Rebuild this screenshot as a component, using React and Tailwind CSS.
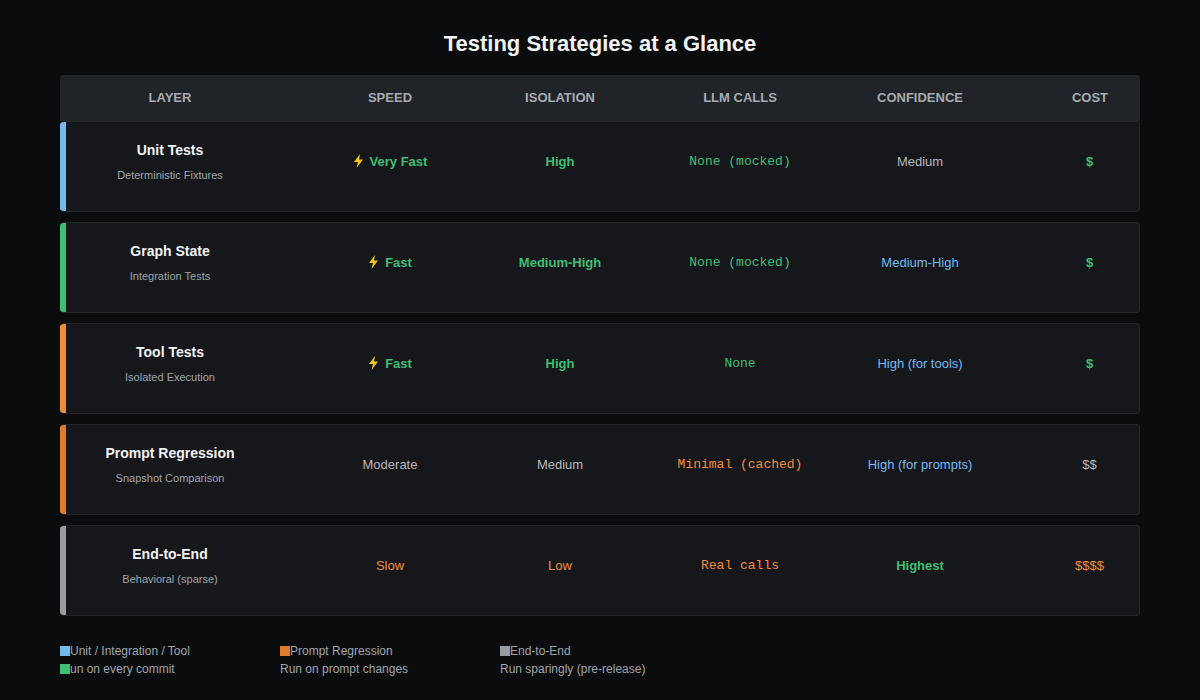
const rows = [
  { name: 'Unit Tests', sub: 'Deterministic Fixtures', bar: 'bg-[#74b9f0]', speed: 'Very Fast', speedC: 'text-[#3fbf73] font-bold', bolt: true, iso: 'High', isoC: 'text-[#3fbf73] font-bold', llm: 'None (mocked)', llmC: 'text-[#3fbf73]', conf: 'Medium', confC: 'text-[#b5b8bd]', cost: '$', costC: 'text-[#3fbf73] font-bold' },
  { name: 'Graph State', sub: 'Integration Tests', bar: 'bg-[#3fbf73]', speed: 'Fast', speedC: 'text-[#3fbf73] font-bold', bolt: true, iso: 'Medium-High', isoC: 'text-[#3fbf73] font-bold', llm: 'None (mocked)', llmC: 'text-[#3fbf73]', conf: 'Medium-High', confC: 'text-[#74b9f0]', cost: '$', costC: 'text-[#3fbf73] font-bold' },
  { name: 'Tool Tests', sub: 'Isolated Execution', bar: 'bg-[#f28c38]', speed: 'Fast', speedC: 'text-[#3fbf73] font-bold', bolt: true, iso: 'High', isoC: 'text-[#3fbf73] font-bold', llm: 'None', llmC: 'text-[#3fbf73]', conf: 'High (for tools)', confC: 'text-[#74b9f0]', cost: '$', costC: 'text-[#3fbf73] font-bold' },
  { name: 'Prompt Regression', sub: 'Snapshot Comparison', bar: 'bg-[#e07b28]', speed: 'Moderate', speedC: 'text-[#b5b8bd]', iso: 'Medium', isoC: 'text-[#b5b8bd]', llm: 'Minimal (cached)', llmC: 'text-[#f28c38]', conf: 'High (for prompts)', confC: 'text-[#74b9f0]', cost: '$$', costC: 'text-[#b5b8bd]' },
  { name: 'End-to-End', sub: 'Behavioral (sparse)', bar: 'bg-[#9a9ca1]', speed: 'Slow', speedC: 'text-[#f28c38]', iso: 'Low', isoC: 'text-[#f28c38]', llm: 'Real calls', llmC: 'text-[#f28c38]', conf: 'Highest', confC: 'text-[#3fbf73] font-bold', cost: '$$$$', costC: 'text-[#f28c38]' },
];

const cols = 'grid grid-cols-[220px_220px_120px_240px_120px_1fr] items-center text-center';

function Bolt() {
  return (
    <svg width="11" height="14" viewBox="0 0 11 14" className="inline-block mr-1.5 -mt-0.5">
      <path d="M7 0 L1 8 H5 L3.5 14 L10 5.5 H6 Z" fill="#f5c518" />
    </svg>
  );
}

export default function App() {
  return (
    <div className="min-h-screen w-full bg-[#0b0c0e] text-white font-[Liberation_Sans] px-[60px] pt-[30px]">
      <h1 className="text-center text-[22px] leading-[28px] font-bold text-[#f2f3f5] mb-[17px]">Testing Strategies at a Glance</h1>

      {/* Header */}
      <div className={`${cols} h-[46px] bg-[#202328] rounded-t-sm text-[13px] font-semibold text-[#a7abb1]`}>
        <div>LAYER</div>
        <div>SPEED</div>
        <div>ISOLATION</div>
        <div>LLM CALLS</div>
        <div>CONFIDENCE</div>
        <div className="pl-[60px]">COST</div>
      </div>

      <div className="flex flex-col gap-[10px]">
        {rows.map((r) => (
          <div key={r.name} className="flex h-[91px] bg-[#16171b] border border-l-0 border-[#24262b] rounded-sm overflow-hidden">
            <div className={`w-[6px] ${r.bar}`}></div>
            <div className={`${cols} flex-1 -ml-[6px] text-[13px] -mt-[10px]`}>
              <div className="flex flex-col gap-[6px]">
                <div className="text-[14px] font-bold text-[#f2f3f5]">{r.name}</div>
                <div className="text-[11px] text-[#a0a4aa]">{r.sub}</div>
              </div>
              <div className={r.speedC}>{r.bolt && <Bolt />}{r.speed}</div>
              <div className={r.isoC}>{r.iso}</div>
              <div className={`font-[Liberation_Mono] ${r.llmC}`}>{r.llm}</div>
              <div className={r.confC}>{r.conf}</div>
              <div className={`pl-[60px] ${r.costC}`}>{r.cost}</div>
            </div>
          </div>
        ))}
      </div>

      <div className="flex mt-[26px] text-[12px] text-[#a0a4aa] leading-[18px]">
        <div className="w-[220px]">
          <div className="flex items-center"><span className="w-[10px] h-[10px] bg-[#74b9f0]"></span>Unit / Integration / Tool</div>
          <div className="flex items-center"><span className="w-[10px] h-[10px] bg-[#3fbf73]"></span>un on every commit</div>
        </div>
        <div className="w-[220px]">
          <div className="flex items-center"><span className="w-[10px] h-[10px] bg-[#e07b28]"></span>Prompt Regression</div>
          <div>Run on prompt changes</div>
        </div>
        <div>
          <div className="flex items-center"><span className="w-[10px] h-[10px] bg-[#9a9ca1]"></span>End-to-End</div>
          <div>Run sparingly (pre-release)</div>
        </div>
      </div>
    </div>
  );
}
